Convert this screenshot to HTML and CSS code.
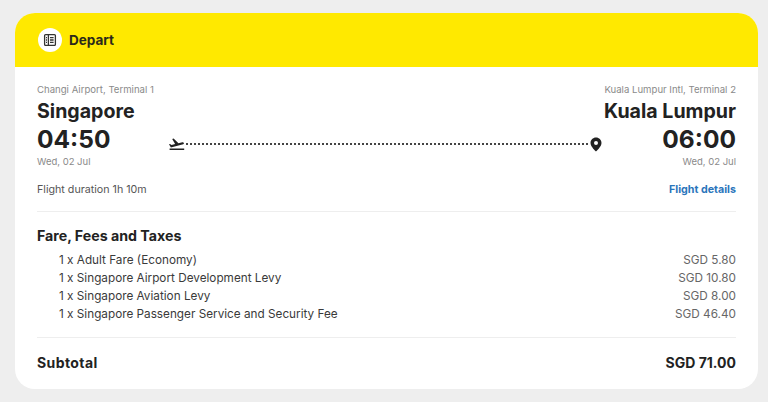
FILE: index.html
```html
<!DOCTYPE html>
<html>
<head>
    <title>Depart</title>
    <link rel="stylesheet" href="styles.css">
</head>
<body>
    <div class="card">
        <div class="card-header">
            <div class="header-icon">
                <svg width="14" height="14" viewBox="0 0 14 14" fill="none" stroke="#333" stroke-width="1.3">
                    <rect x="1.6" y="1.6" width="10.8" height="10.8" rx="1"/>
                    <path d="M5.4 2v10M7 4.6h3.6M7 7h3.6M7 9.4h3.6M3 4.6h1M3 7h1M3 9.4h1"/>
                </svg>
            </div>
            <span class="header-title">Depart</span>
        </div>
        <div class="card-body">
            <div class="route">
                <div class="place">
                    <div class="airport">Changi Airport, Terminal 1</div>
                    <div class="city">Singapore</div>
                    <div class="time">04:50</div>
                    <div class="date">Wed, 02 Jul</div>
                </div>
                <div class="path">
                    <svg class="plane" width="16" height="14" viewBox="0 0 16 14" fill="#222">
                        <path d="M0.6 13h14.6v-1.6H0.6zM14.9 6.1c-.2-.7-.9-1.1-1.6-.9L9.5 6.2 4.6 1.6l-1.4.4 2.9 5.1-3.6 1-1.5-1.2-1 .3 1.9 3.3 12.3-3.3c.6-.2 1-.8.7-1.1z"/>
                    </svg>
                    <div class="dots"></div>
                    <svg class="pin" width="12" height="15" viewBox="0 0 12 15" fill="#222">
                        <path fill-rule="evenodd" d="M6 .5C2.9.5.5 2.9.5 6c0 3.800 5.500 8.500 5.500 8.500S11.500 9.800 11.500 6C11.500 2.900 9.100.5 6 .5zM6 8a2 2 0 1 1 0-4 2 2 0 0 1 0 4z"/>
                    </svg>
                </div>
                <div class="place place-right">
                    <div class="airport">Kuala Lumpur Intl, Terminal 2</div>
                    <div class="city">Kuala Lumpur</div>
                    <div class="time">06:00</div>
                    <div class="date">Wed, 02 Jul</div>
                </div>
            </div>
            <div class="duration-row">
                <span class="duration">Flight duration 1h 10m</span>
                <a class="details-link" href="#">Flight details</a>
            </div>
            <div class="fees">
                <h3 class="fees-title">Fare, Fees and Taxes</h3>
                <div class="fee-row"><span>1 x Adult Fare (Economy)</span><span class="fee-price">SGD 5.80</span></div>
                <div class="fee-row"><span>1 x Singapore Airport Development Levy</span><span class="fee-price">SGD 10.80</span></div>
                <div class="fee-row"><span>1 x Singapore Aviation Levy</span><span class="fee-price">SGD 8.00</span></div>
                <div class="fee-row"><span>1 x Singapore Passenger Service and Security Fee</span><span class="fee-price">SGD 46.40</span></div>
            </div>
            <div class="subtotal">
                <span class="subtotal-label">Subtotal</span>
                <span>SGD 71.00</span>
            </div>
        </div>
    </div>
</body>
</html>
```
FILE: styles.css
```css
body {
    margin: 0;
    padding: 13px 10px 13px 15px;
    background-color: #eeeeee;
    font-family: Inter, "Open Sans", sans-serif;
    color: #222;
}
.card {
    background-color: #fff;
    border-radius: 20px;
    overflow: hidden;
    height: 376px;
}
.card-header {
    height: 54px;
    background-color: #ffe900;
    display: flex;
    align-items: center;
    gap: 7px;
    padding: 0 23px;
}
.header-icon {
    width: 24px;
    height: 24px;
    border-radius: 50%;
    background-color: #fff;
    display: flex;
    justify-content: center;
    align-items: center;
}
.header-title {
    font-size: 13.5px;
    font-weight: 700;
    color: #2b2a1a;
}
.card-body {
    padding: 16px 22px 0 22px;
}
.route {
    display: flex;
    justify-content: space-between;
    height: 95px;
}
.place {
    width: 140px;
    white-space: nowrap;
}
.place-right {
    text-align: right;
}
.airport {
    font-size: 9.6px;
    line-height: 13px;
    color: #8a8a8a;
}
.city {
    font-size: 19.6px;
    font-weight: 700;
    line-height: 24px;
    margin-top: 3px;
}
.time {
    font-size: 24.5px;
    font-weight: 700;
    line-height: 32px;
}
.date {
    font-size: 9.5px;
    line-height: 14px;
    color: #8a8a8a;
}
.path {
    flex: 1;
    display: flex;
    align-items: center;
    height: 16px;
    margin: 53px -6px 0 -8px;
}
.plane {
    margin-right: 1px;
}
.dots {
    flex: 1;
    border-top: 2px dotted #444;
    margin-right: 2px;
}
.duration-row {
    display: flex;
    justify-content: space-between;
    align-items: center;
    height: 18px;
    margin-top: 2px;
    padding-bottom: 13px;
    border-bottom: 1px solid #eeeeee;
}
.duration {
    font-size: 10.7px;
    color: #555;
}
.details-link {
    font-size: 10.7px;
    font-weight: 700;
    color: #2a75bb;
    text-decoration: none;
}
.fees {
    padding-top: 16px;
    padding-bottom: 14px;
    border-bottom: 1px solid #eeeeee;
}
.fees-title {
    margin: 0 0 7px;
    font-size: 14.2px;
    line-height: 16px;
    font-weight: 700;
}
.fee-row {
    display: flex;
    justify-content: space-between;
    font-size: 11.75px;
    line-height: 18px;
    padding-left: 22px;
    color: #3a3a3a;
}
.fee-price {
    color: #666;
}
.subtotal {
    display: flex;
    justify-content: space-between;
    font-size: 14px;
    font-weight: 700;
    line-height: 16px;
    padding-top: 17px;
}
.subtotal-label {
    letter-spacing: 0.4px;
}
```
